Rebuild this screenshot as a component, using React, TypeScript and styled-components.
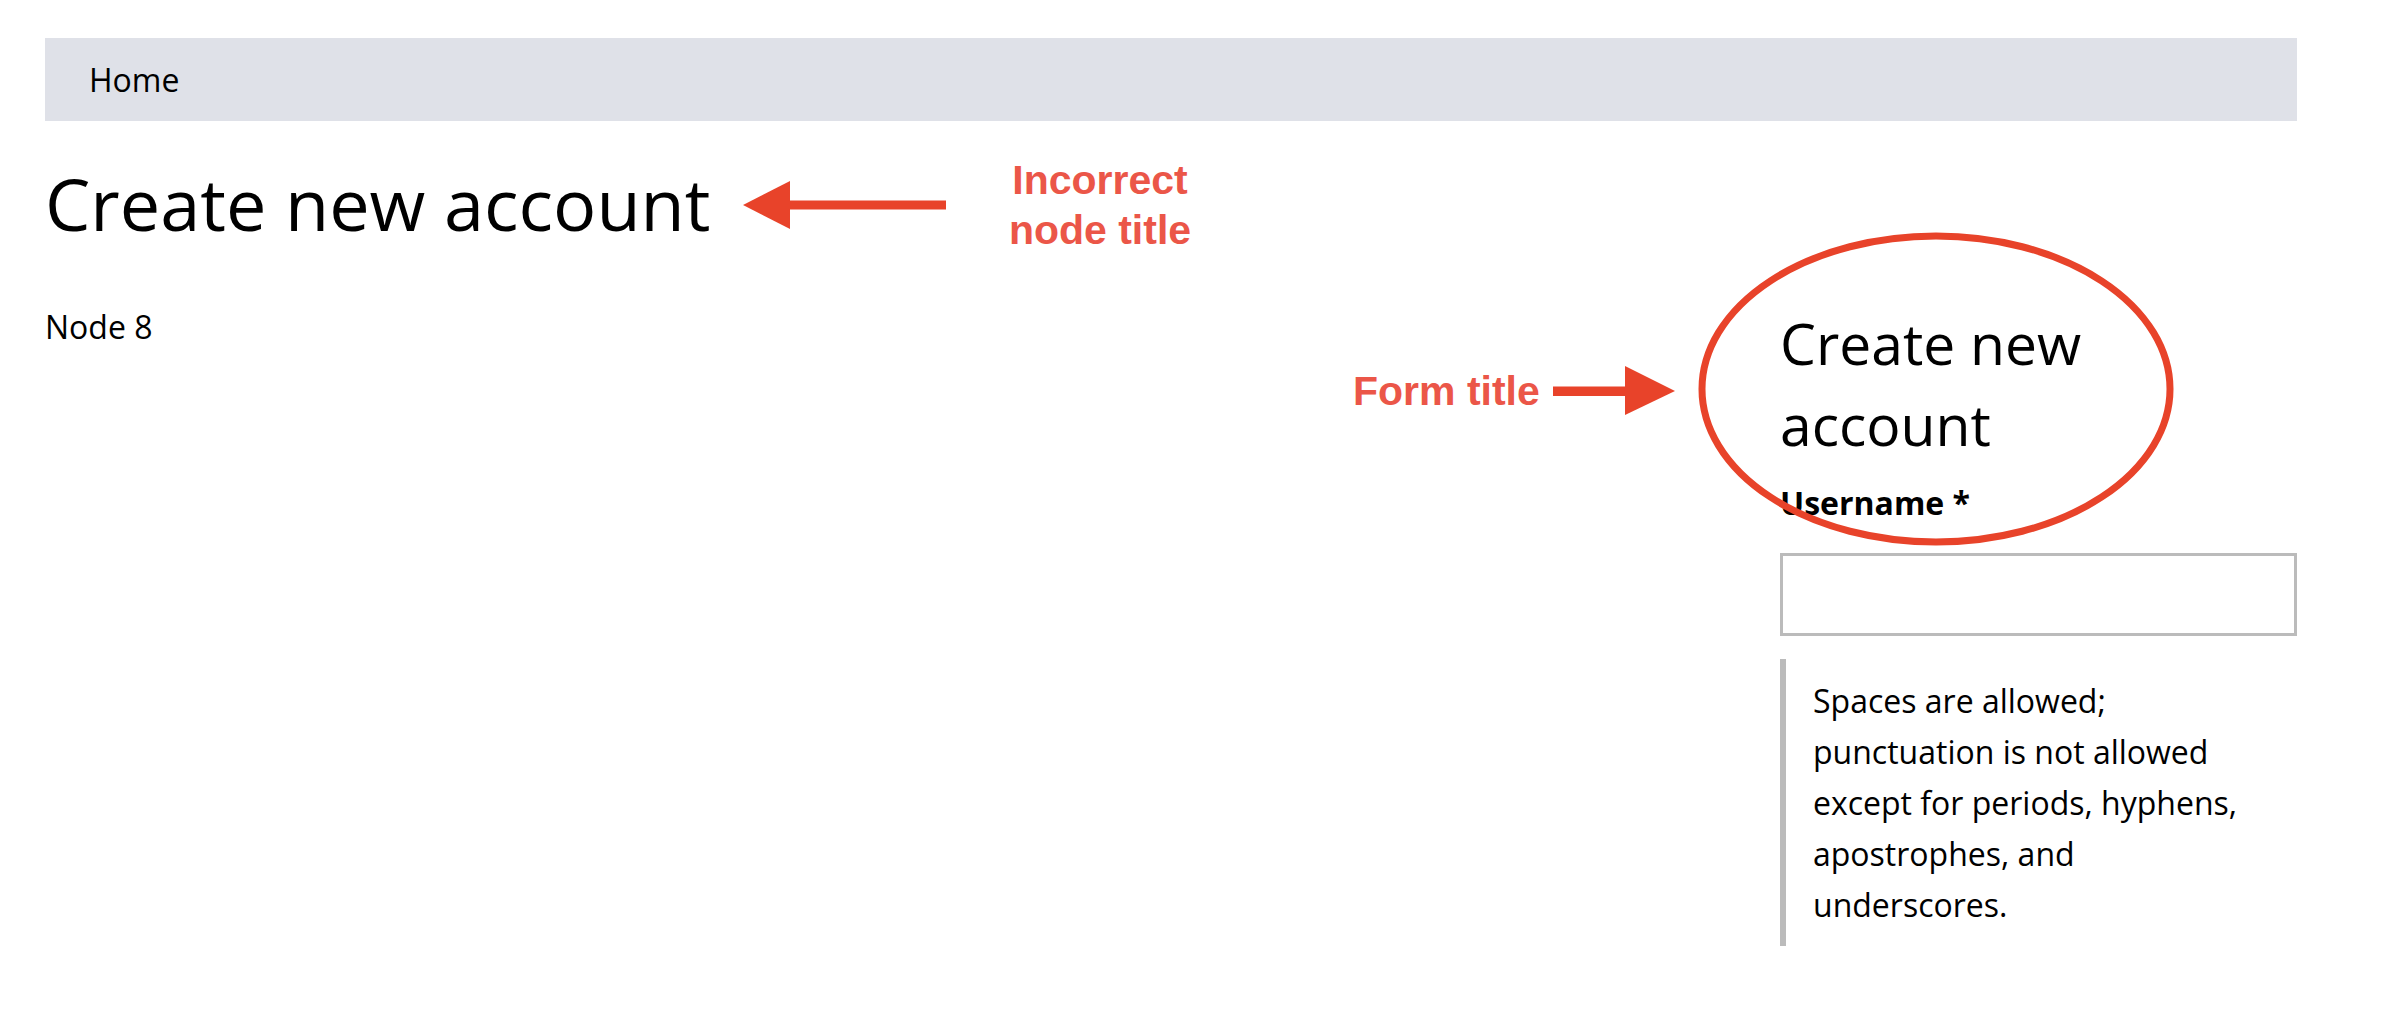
import { FC } from 'react';
import styled, { createGlobalStyle } from 'styled-components';

const GlobalStyle = createGlobalStyle`
  html, body {
    margin: 0;
    padding: 0;
    background: #fff;
  }

  body {
    font-family: 'Open Sans', 'Noto Sans', sans-serif;
    color: #000;
  }
`;

const ARROW = '#e8432a';
const NOTE = '#eb5648';

export default function App() {
  return (
    <>
      <GlobalStyle />
      <SPage>
        <SBreadcrumb>
          <SCrumb href='#'>Home</SCrumb>
        </SBreadcrumb>
        <STitle>Create new account</STitle>
        <SColumns>
          <SMain>
            <SText>Node 8</SText>
          </SMain>
          <SSidebar>
            <SFormTitle>Create new account</SFormTitle>
            <SLabel htmlFor='edit-name'>
              Username <span>*</span>
            </SLabel>
            <SInput id='edit-name' type='text' />
            <SDescription>
              Spaces are allowed; punctuation is not allowed except for periods, hyphens,
              apostrophes, and underscores.
            </SDescription>
          </SSidebar>
        </SColumns>
        <Annotations />
      </SPage>
    </>
  );
}

// annotation layer drawn over the screenshot: arrows, ellipse and red notes
const Annotations: FC = () => (
  <>
    <SOverlay width='2392' height='1014' viewBox='0 0 2392 1014'>
      <polygon points='743,205 790,181 790,229' fill={ARROW} />
      <rect x='789' y='200.5' width='157' height='9' fill={ARROW} />
      <rect x='1553' y='386.5' width='74' height='9.5' fill={ARROW} />
      <polygon points='1625,366 1675,391 1625,415' fill={ARROW} />
      <ellipse cx='1936' cy='389' rx='234' ry='153' fill='none' stroke={ARROW} strokeWidth='7' />
    </SOverlay>
    <SNote left={980} top={155} width={240}>
      Incorrect
      <br />
      node title
    </SNote>
    <SNote left={1353} top={366}>
      Form title
    </SNote>
  </>
);

const SPage = styled.div`
  position: relative;
  width: 2392px;
  min-height: 1014px;
  box-sizing: border-box;
  padding: 38px 95px 0 45px;
`;

const SBreadcrumb = styled.nav`
  display: flex;
  align-items: center;
  height: 83px;
  padding-left: 44px;
  background: #dfe1e8;
`;

const SCrumb = styled.a`
  font-size: 32px;
  line-height: 48px;
  color: #000;
  text-decoration: none;
`;

const STitle = styled.h1`
  margin: 39px 0 0;
  font-size: 72px;
  font-weight: 400;
  line-height: 1.2;
`;

const SColumns = styled.div`
  display: flex;
  margin-top: 57px;
`;

const SMain = styled.main`
  flex: 1;
`;

const SText = styled.p`
  margin: 0;
  font-size: 32px;
  line-height: 48px;
`;

const SSidebar = styled.aside`
  display: flex;
  flex-direction: column;
  width: 517px;
`;

const SFormTitle = styled.h2`
  margin: 0;
  font-size: 57px;
  font-weight: 400;
  line-height: 81px;
`;

const SLabel = styled.label`
  margin-top: 14px;
  font-size: 32px;
  font-weight: 700;
  line-height: 48px;
`;

const SInput = styled.input`
  box-sizing: border-box;
  width: 100%;
  height: 83px;
  margin: 26px 0 0;
  border: 3px solid #bbb;
  border-radius: 0;
  background: #fff;
  outline: none;
`;

const SDescription = styled.div`
  margin-top: 23px;
  padding: 16px 44px 16px 27px;
  border-left: 6px solid #bbb;
  font-size: 32px;
  line-height: 51px;
`;

const SOverlay = styled.svg`
  position: absolute;
  top: 0;
  left: 0;
  pointer-events: none;
`;

const SNote = styled.div<{ left: number; top: number; width?: number }>`
  position: absolute;
  left: ${(p) => p.left}px;
  top: ${(p) => p.top}px;
  width: ${(p) => (p.width ? `${p.width}px` : 'auto')};
  font-family: 'Liberation Sans', Arial, sans-serif;
  font-size: 41px;
  font-weight: 700;
  line-height: 50px;
  text-align: center;
  color: ${NOTE};
  white-space: nowrap;
`;
